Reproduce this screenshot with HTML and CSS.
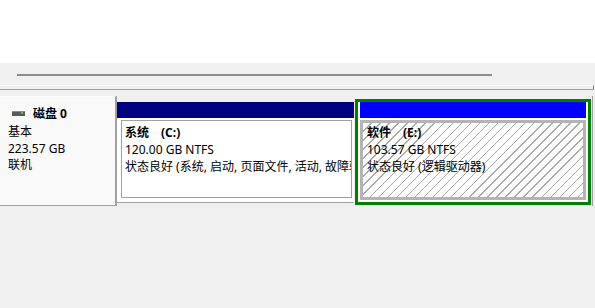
FILE: index.html
```html
<!DOCTYPE html>
<html lang="zh-CN">
<head>
<meta charset="utf-8">
<title>磁盘管理</title>
<link rel="stylesheet" href="styles.css">
</head>
<body>
<div class="top"></div>
<div class="bar-area"><div class="hline"></div></div>
<div class="frame-edge"></div>
<div class="disk">
  <div class="label">
    <div class="title"><span class="icon"><span class="led"></span></span><b>磁盘 0</b></div>
    <div class="line">基本</div>
    <div class="line">223.57 GB</div>
    <div class="line">联机</div>
  </div>
  <div class="parts">
    <div class="part part-c">
      <div class="strip strip-navy"></div>
      <div class="body">
        <div class="box">
          <div class="name">系统　(C:)</div>
          <div>120.00 GB NTFS</div>
          <div>状态良好 (系统, 启动, 页面文件, 活动, 故障转储, 主分区)</div>
        </div>
      </div>
    </div>
    <div class="part part-e">
      <div class="strip strip-blue"></div>
      <div class="body">
        <div class="box hatch">
          <div class="name">软件　(E:)</div>
          <div>103.57 GB NTFS</div>
          <div>状态良好 (逻辑驱动器)</div>
        </div>
      </div>
    </div>
  </div>
</div>
</body>
</html>
```

FILE: styles.css
```css
html, body {
  margin: 0;
  padding: 0;
}
body {
  width: 595px;
  height: 308px;
  overflow: hidden;
  background: #f0f0f0;
  color: #000;
  font: 12px/16px "Noto Sans", "Noto Sans CJK SC", sans-serif;
}
.top {
  height: 63px;
  background: #fff;
}
.bar-area {
  height: 22px;
  padding-left: 17px;
  display: flex;
  align-items: flex-start;
}
.hline {
  margin-top: 11px;
  width: 475px;
  height: 2px;
  background: #8c8c8c;
}
.frame-edge {
  height: 3px;
  margin-right: 1px;
  border-top: 1px solid #fbfbfb;
  border-bottom: 1px solid #a0a0a0;
  border-right: 1px solid #808080;
}
.disk {
  margin-top: 6px;
  height: 110px;
  display: flex;
}
.label {
  box-sizing: border-box;
  width: 116px;
  height: 110px;
  padding: 8px 0 0 8px;
  background: #f9f9f9;
  border-top: 1px solid #fcfcfc;
  border-right: 1px solid #a0a0a0;
  border-bottom: 1px solid #a0a0a0;
}
.title {
  display: flex;
  align-items: center;
  height: 18px;
  margin-bottom: 1px;
}
.icon {
  position: relative;
  width: 13px;
  height: 4px;
  margin: -2px 8px 0 4px;
  background: #5a5a5a;
  border-top: 1px solid #8a8a8a;
}
.led {
  position: absolute;
  right: 2px;
  top: 0;
  width: 2px;
  height: 2px;
  background: #3cd23c;
}
.title b {
  font-weight: 700;
}
.line {
  line-height: 16.5px;
}
.parts {
  flex: 1;
  display: flex;
  gap: 1px;
  margin-right: 2px;
  border-left: 1px solid #a0a0a0;
  border-right: 1px solid #a0a0a0;
}
.part {
  box-sizing: border-box;
  display: flex;
  flex-direction: column;
}
.part-c {
  width: 237px;
  margin-top: 6px;
  height: 101px;
  border-bottom: 1px solid #a0a0a0;
  background: #fff;
}
.strip {
  height: 16px;
  flex: none;
}
.strip-navy {
  background: #000080;
}
.strip-blue {
  background: #0000ff;
}
.part-c .body {
  flex: 1;
  padding: 2px 2px 4px 4px;
}
.box {
  box-sizing: border-box;
  height: 100%;
  overflow: hidden;
  white-space: nowrap;
  line-height: 17px;
  background: #fff;
}
.part-c .box {
  border: 1px solid #a0a0a0;
  padding: 3px 0 0 3px;
}
.name {
  font-weight: 700;
}
.part-e {
  width: 236px;
  margin-top: 3px;
  height: 106px;
  border: 3px solid #008000;
  border-top-width: 3px;
  padding: 0 2px 2px 2px;
  background: #fff;
}
.part-e .body {
  flex: 1;
  padding-top: 2px;
}
.part-e .box {
  border: 3px solid #b4b4b4;
  padding: 1px 0 0 4px;
}
.hatch {
  background: repeating-linear-gradient(135deg, #fff 0 5.4px, #a8a8a8 5.4px 6.4px);
}
```
